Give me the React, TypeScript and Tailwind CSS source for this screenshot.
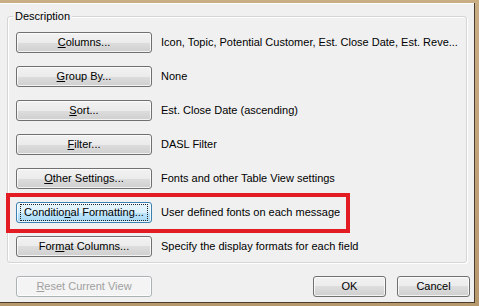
import React from "react";

type Row = {
  pre: string;
  key: string;
  post: string;
  desc: string;
  focused?: boolean;
};

const rows: Row[] = [
  { pre: "", key: "C", post: "olumns...", desc: "Icon, Topic, Potential Customer, Est. Close Date, Est. Reve..." },
  { pre: "", key: "G", post: "roup By...", desc: "None" },
  { pre: "", key: "S", post: "ort...", desc: "Est. Close Date (ascending)" },
  { pre: "", key: "F", post: "ilter...", desc: "DASL Filter" },
  { pre: "", key: "O", post: "ther Settings...", desc: "Fonts and other Table View settings" },
  { pre: "Conditio", key: "n", post: "al Formatting...", desc: "User defined fonts on each message", focused: true },
  { pre: "For", key: "m", post: "at Columns...", desc: "Specify the display formats for each field" },
];

function WinButton({
  children,
  width,
  focused,
  disabled,
}: {
  children: React.ReactNode;
  width: string;
  focused?: boolean;
  disabled?: boolean;
}) {
  const skin = disabled
    ? "border-[#adb2b5] bg-[#f4f4f4] text-[#a0a0a0]"
    : focused
    ? "border-[#3c7fb1] bg-[linear-gradient(to_bottom,#eaf6fd_0%,#d9f0fc_50%,#bee6fd_50%,#a7d9f5_100%)] text-black"
    : "border-[#707070] bg-[linear-gradient(to_bottom,#f2f2f2_0%,#ebebeb_50%,#dddddd_50%,#cfcfcf_100%)] text-black";
  return (
    <div
      className={`${width} h-[21px] shrink-0 rounded-[3px] border ${skin} flex items-center justify-center shadow-[inset_0_0_0_1px_rgba(255,255,255,0.75)]`}
    >
      <span
        className={`whitespace-nowrap leading-none px-[3px] py-[2px] ${
          focused ? "outline outline-1 outline-dotted outline-[#222]" : ""
        }`}
      >
        {children}
      </span>
    </div>
  );
}

export default function App() {
  return (
    <div
      className="relative w-[479px] h-[306px] overflow-hidden bg-[linear-gradient(to_bottom,#c9ad84,#b7996e)] text-[11px] text-black"
      style={{ fontFamily: "'Liberation Sans', Arial, sans-serif" }}
    >
      <div className="absolute left-0 top-[3px] w-[475px] h-[300px] bg-[#f0f0f0] border-r border-b border-[#4a3d30] shadow-[inset_0_1px_0_#ffffff]">
        <div className="flex flex-col pl-[7px] pt-[13px]">
          {/* group box */}
          <div className="relative w-[460px] h-[247px] border border-[#d5d5d5] rounded-[3px] shadow-[inset_1px_1px_0_#ffffff,1px_1px_0_#ffffff]">
            <div className="absolute left-[5px] -top-[9px] px-[2px] bg-[#f0f0f0] leading-[16px]">
              Description
            </div>
            <div className="flex flex-col gap-[13px] pl-[8px] pt-[15px] overflow-hidden">
              {rows.map((r, i) => (
                <div key={i} className="flex items-center gap-[9px]">
                  <WinButton width="w-[136px]" focused={r.focused}>
                    {r.pre}
                    <span className="underline underline-offset-[1px]">{r.key}</span>
                    {r.post}
                  </WinButton>
                  <span className="whitespace-nowrap leading-none">{r.desc}</span>
                </div>
              ))}
            </div>
          </div>

          {/* bottom buttons */}
          <div className="flex items-center mt-[13px] pl-[9px]">
            <WinButton width="w-[136px]" disabled>
              <span className="underline underline-offset-[1px]">R</span>eset Current View
            </WinButton>
            <div className="flex gap-[11px] ml-[161px]">
              <WinButton width="w-[73px]">OK</WinButton>
              <WinButton width="w-[73px]">Cancel</WinButton>
            </div>
          </div>
        </div>
      </div>

      {/* red highlight annotation */}
      <div className="absolute left-[6px] top-[193px] w-[344px] h-[40px] border-[4px] border-[#e31b23]" />
    </div>
  );
}
